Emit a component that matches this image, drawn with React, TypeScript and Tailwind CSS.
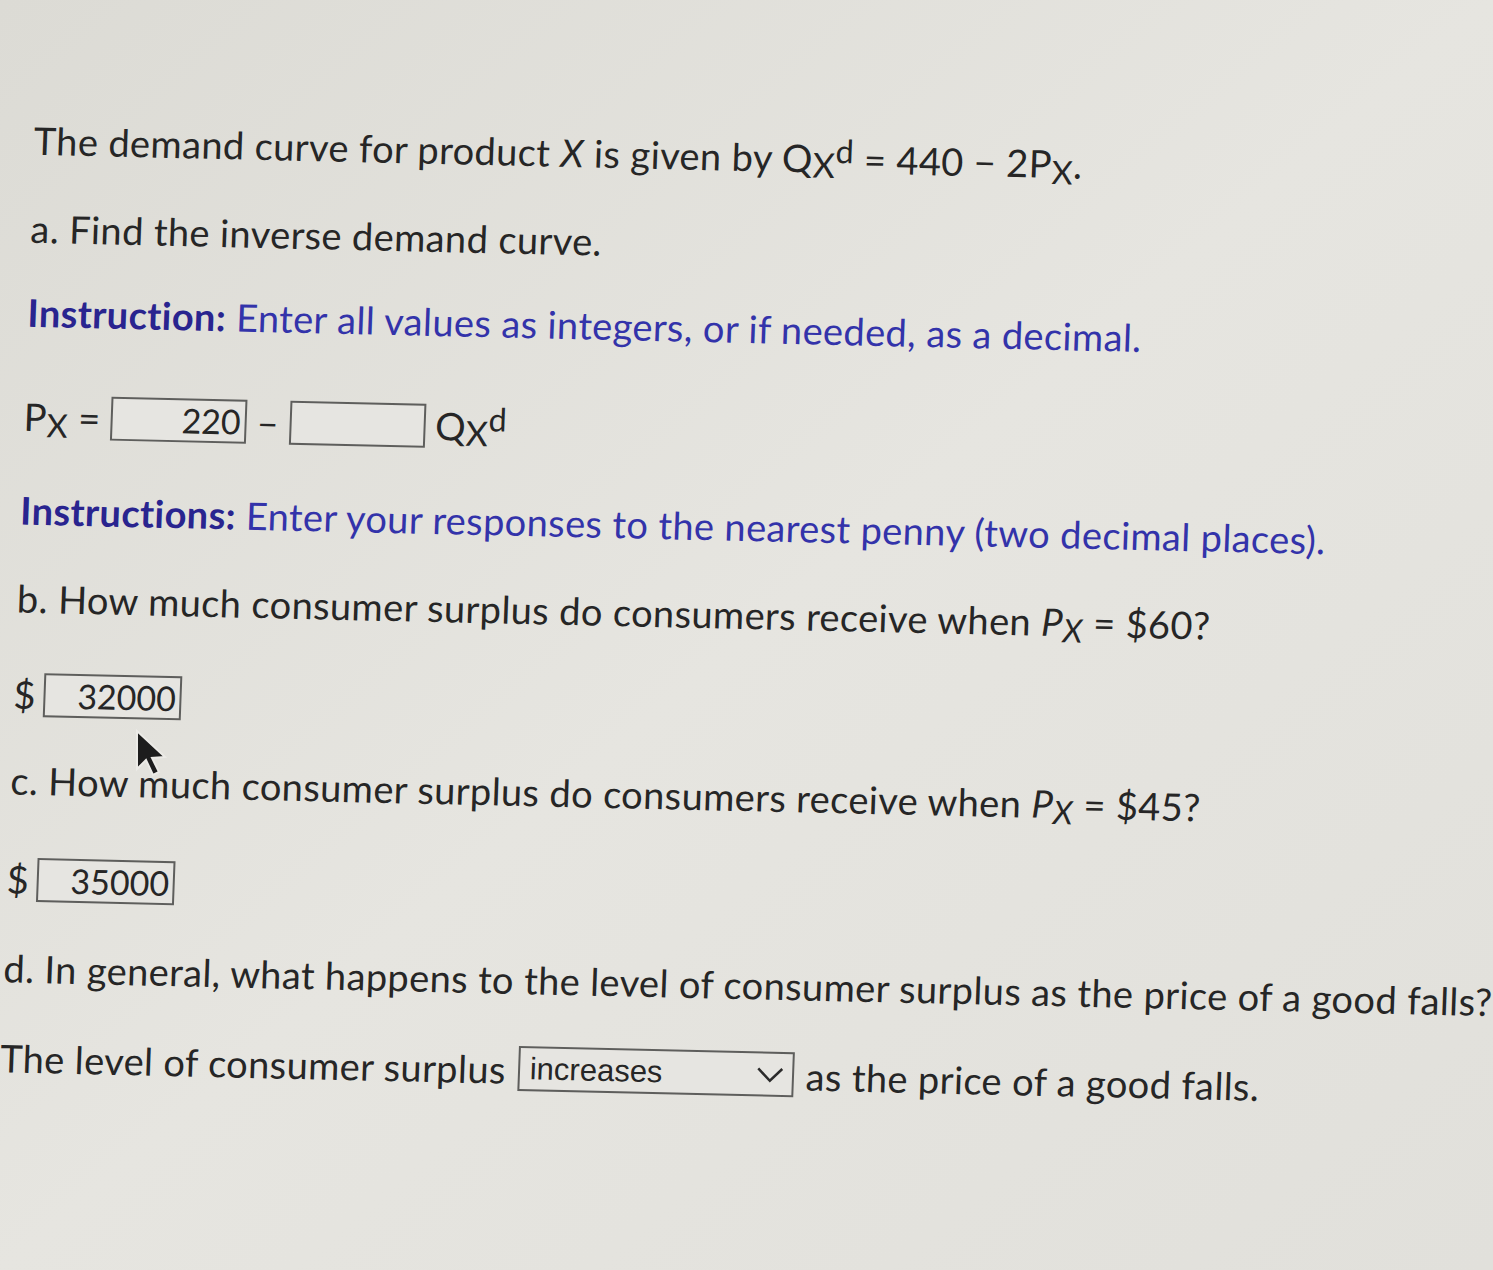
import React from 'react';

const font = { fontFamily: 'Lato, "Open Sans", Arial, sans-serif' };

function Qxd() {
  return (
    <span className="whitespace-nowrap">
      Q<span className="relative top-[0.15em] text-[0.9em]">X</span>
      <sup className="relative top-[-0.3em] text-[0.85em]">d</sup>
    </span>
  );
}

function Px({ italic }: { italic?: boolean }) {
  return (
    <span className="whitespace-nowrap">
      <span className={italic ? 'italic' : ''}>P</span>
      <span className={'relative top-[0.2em] text-[0.85em] ' + (italic ? 'italic' : '')}>X</span>
    </span>
  );
}

function Box({ value, w }: { value?: string; w: string }) {
  return (
    <span
      className={
        'inline-flex h-[44px] items-center justify-end border-2 border-[#5e5e5c] bg-[#e6e5e1] px-1 text-[34px] tracking-normal ' +
        w
      }
    >
      {value}
    </span>
  );
}

function Cursor() {
  return (
    <svg className="absolute left-[134px] top-[728px]" width="38" height="52" viewBox="0 0 38 52">
      <path
        d="M3 3 L3 41 L12 32 L19 47 L25 44 L18 30 L31 29 Z"
        fill="#1d1d1d"
        stroke="#ecebe7"
        strokeWidth="2"
      />
    </svg>
  );
}

export default function App() {
  return (
    <div
      className="relative h-[1270px] w-full overflow-hidden bg-gradient-to-br from-[#dcdbd5] via-[#e6e5e0] to-[#e1e0db] text-[#262626]"
      style={font}
    >
      <div className="origin-top-left rotate-[1.3deg] skew-x-[-0.8deg] pl-[39px] pt-[120px] text-[38px] leading-none tracking-[0.01em]">
        <div className="h-[88px] whitespace-nowrap">
          The demand curve for product <span className="italic">X</span> is given by <Qxd /> = 440 − 2<Px />.
        </div>
        <div className="h-[84px]">a. Find the inverse demand curve.</div>
        <div className="h-[102px] whitespace-nowrap text-[#3333aa]">
          <span className="font-bold text-[#29248f]">Instruction:</span> Enter all values as integers, or if needed, as
          a decimal.
        </div>
        <div className="flex h-[96px] items-start gap-[10px]">
          <span className="mt-[2px] whitespace-nowrap">
            <Px /> =
          </span>
          <Box value="220" w="w-[136px]" />
          <span className="mt-[2px]">–</span>
          <Box w="w-[136px]" />
          <span className="mt-[2px]">
            <Qxd />
          </span>
        </div>
        <div className="h-[88px] whitespace-nowrap text-[#3333aa]">
          <span className="font-bold text-[#29248f]">Instructions:</span> Enter your responses to the nearest penny (two
          decimal places).
        </div>
        <div className="h-[94px] whitespace-nowrap">
          b. How much consumer surplus do consumers receive when <Px italic /> = $60?
        </div>
        <div className="flex h-[88px] items-start gap-[8px]">
          <span className="mt-[2px]">$</span>
          <Box value="32000" w="w-[138px]" />
        </div>
        <div className="h-[97px] whitespace-nowrap">
          c. How much consumer surplus do consumers receive when <Px italic /> = $45?
        </div>
        <div className="flex h-[91px] items-start gap-[8px]">
          <span className="mt-[2px]">$</span>
          <Box value="35000" w="w-[138px]" />
        </div>
        <div className="h-[90px] whitespace-nowrap">
          d. In general, what happens to the level of consumer surplus as the price of a good falls?
        </div>
        <div className="flex items-start gap-[12px] whitespace-nowrap">
          <span>The level of consumer surplus</span>
          <span
            className="-mt-[4px] inline-flex h-[45px] w-[276px] items-center justify-between border-2 border-[#5e5e5c] bg-[#e6e5e1] pl-[10px] pr-[8px] text-[31px] tracking-normal"
            style={{ fontFamily: '"Liberation Sans", Arial, sans-serif' }}
          >
            increases
            <svg width="28" height="18" viewBox="0 0 28 18">
              <path d="M2 3 L14 15 L26 3" fill="none" stroke="#2b2b2b" strokeWidth="2.5" />
            </svg>
          </span>
          <span>as the price of a good falls.</span>
        </div>
      </div>
      <Cursor />
    </div>
  );
}
